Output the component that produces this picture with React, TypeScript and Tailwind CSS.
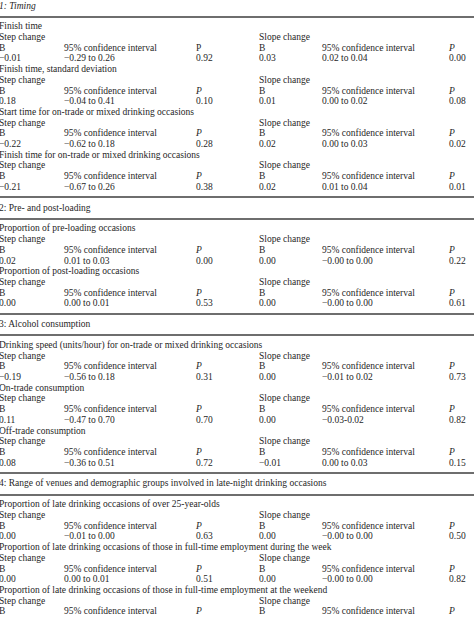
type Stat = { b: string; ci: string; p: string; pItalic?: boolean }

type Item = { label: string; step: Stat; slope: Stat }

type Section = { title: string; italic?: boolean; items: Item[] }

const sections: Section[] = [
  {
    title: '1: Timing',
    italic: true,
    items: [
      {
        label: 'Finish time',
        step: { b: '\u22120.01', ci: '\u22120.29 to 0.26', p: '0.92', pItalic: false },
        slope: { b: '0.03', ci: '0.02 to 0.04', p: '0.00' },
      },
      {
        label: 'Finish time, standard deviation',
        step: { b: '0.18', ci: '\u22120.04 to 0.41', p: '0.10' },
        slope: { b: '0.01', ci: '0.00 to 0.02', p: '0.08' },
      },
      {
        label: 'Start time for on-trade or mixed drinking occasions',
        step: { b: '\u22120.22', ci: '\u22120.62 to 0.18', p: '0.28' },
        slope: { b: '0.02', ci: '0.00 to 0.03', p: '0.02' },
      },
      {
        label: 'Finish time for on-trade or mixed drinking occasions',
        step: { b: '\u22120.21', ci: '\u22120.67 to 0.26', p: '0.38' },
        slope: { b: '0.02', ci: '0.01 to 0.04', p: '0.01' },
      },
    ],
  },
  {
    title: '2: Pre- and post-loading',
    items: [
      {
        label: 'Proportion of pre-loading occasions',
        step: { b: '0.02', ci: '0.01 to 0.03', p: '0.00' },
        slope: { b: '0.00', ci: '\u22120.00 to 0.00', p: '0.22' },
      },
      {
        label: 'Proportion of post-loading occasions',
        step: { b: '0.00', ci: '0.00 to 0.01', p: '0.53' },
        slope: { b: '0.00', ci: '\u22120.00 to 0.00', p: '0.61' },
      },
    ],
  },
  {
    title: '3: Alcohol consumption',
    items: [
      {
        label: 'Drinking speed (units/hour) for on-trade or mixed drinking occasions',
        step: { b: '\u22120.19', ci: '\u22120.56 to 0.18', p: '0.31' },
        slope: { b: '0.00', ci: '\u22120.01 to 0.02', p: '0.73' },
      },
      {
        label: 'On-trade consumption',
        step: { b: '0.11', ci: '\u22120.47 to 0.70', p: '0.70' },
        slope: { b: '0.00', ci: '\u22120.03-0.02', p: '0.82' },
      },
      {
        label: 'Off-trade consumption',
        step: { b: '0.08', ci: '\u22120.36 to 0.51', p: '0.72' },
        slope: { b: '\u22120.01', ci: '0.00 to 0.03', p: '0.15' },
      },
    ],
  },
  {
    title: '4: Range of venues and demographic groups involved in late-night drinking occasions',
    items: [
      {
        label: 'Proportion of late drinking occasions of over 25-year-olds',
        step: { b: '0.00', ci: '\u22120.01 to 0.00', p: '0.63' },
        slope: { b: '0.00', ci: '\u22120.00 to 0.00', p: '0.50' },
      },
      {
        label: 'Proportion of late drinking occasions of those in full-time employment during the week',
        step: { b: '0.00', ci: '0.00 to 0.01', p: '0.51' },
        slope: { b: '0.00', ci: '\u22120.00 to 0.00', p: '0.82' },
      },
      {
        label: 'Proportion of late drinking occasions of those in full-time employment at the weekend',
        step: { b: '0.00', ci: '0.00 to 0.01', p: '0.46' },
        slope: { b: '0.00', ci: '\u22120.00 to 0.00', p: '0.70' },
      },
    ],
  },
]

function StepBlock({ stat }: { stat: Stat }) {
  return (
    <div className="w-[260px] shrink-0">
      <div>Step change</div>
      <div className="flex">
        <span className="w-[65px]">B</span>
        <span className="w-[132px]">95% confidence interval</span>
        <span className={stat.pItalic === false ? '' : 'italic'}>P</span>
      </div>
      <div className="flex">
        <span className="w-[65px]">{stat.b}</span>
        <span className="w-[132px]">{stat.ci}</span>
        <span>{stat.p}</span>
      </div>
    </div>
  )
}

function SlopeBlock({ stat }: { stat: Stat }) {
  return (
    <div className="w-[240px] shrink-0">
      <div>Slope change</div>
      <div className="flex">
        <span className="w-[63px]">B</span>
        <span className="w-[127px]">95% confidence interval</span>
        <span className="italic">P</span>
      </div>
      <div className="flex">
        <span className="w-[63px]">{stat.b}</span>
        <span className="w-[127px]">{stat.ci}</span>
        <span>{stat.p}</span>
      </div>
    </div>
  )
}

export default function App() {
  return (
    <div className="h-[617px] w-[474px] overflow-hidden bg-white">
      <div
        className="mt-[-6px] ml-[-1px] w-[540px] text-[9.5px] leading-[10.7px] text-[#262626]"
        style={{ fontFamily: '"Liberation Serif", "DejaVu Serif", serif' }}
      >
        {sections.map((section) => (
          <section key={section.title}>
            <div
              className={
                'whitespace-nowrap border-y-2 border-[#6e6e6e] py-[4.5px] ' +
                (section.italic ? 'italic' : '')
              }
            >
              {section.title}
            </div>
            <div className="py-[3.6px]">
              {section.items.map((item) => (
                <div key={item.label}>
                  <div className="whitespace-nowrap">{item.label}</div>
                  <div className="flex whitespace-nowrap">
                    <StepBlock stat={item.step} />
                    <SlopeBlock stat={item.slope} />
                  </div>
                </div>
              ))}
            </div>
          </section>
        ))}
      </div>
    </div>
  )
}
